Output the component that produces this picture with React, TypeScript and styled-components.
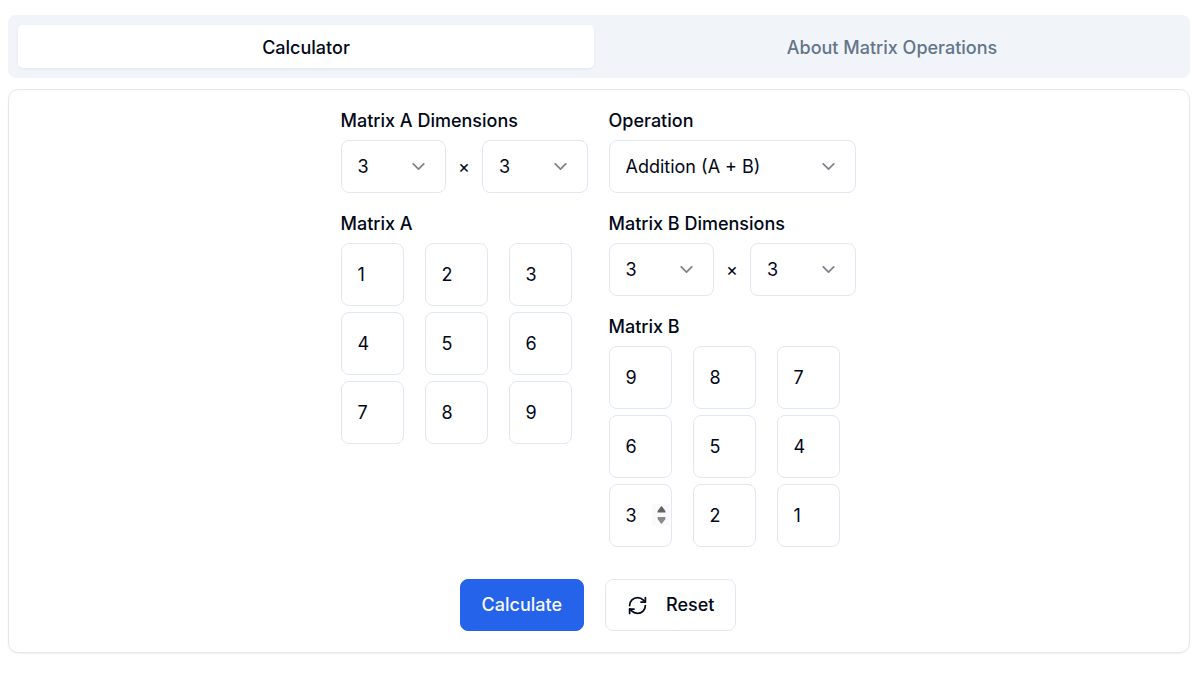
import React, { useState } from "react";
import styled, { createGlobalStyle } from "styled-components";
import { ChevronDown, RefreshCw } from "lucide-react";

const GlobalStyle = createGlobalStyle`
  *, *::before, *::after { box-sizing: border-box; }
  body {
    margin: 0;
    background: #ffffff;
    color: #020817;
    font-family: Inter, "Liberation Sans", sans-serif;
    font-size: 18px;
    line-height: 26px;
  }
  button, input, select { font: inherit; color: inherit; margin: 0; }
`;

const Page = styled.main`
  padding: 15px 10px 15px 8px;
`;

const TabList = styled.div`
  display: grid;
  grid-template-columns: repeat(2, 1fr);
  padding: 5px;
  border-radius: 8px;
  background: #f1f5f9;
`;

const Tab = styled.button<{ $active: boolean }>`
  margin: 5px;
  height: 43px;
  padding: 2px 16px 0;
  border: 0;
  border-radius: 5px;
  font-weight: 500;
  cursor: pointer;
  background: ${(p) => (p.$active ? "#ffffff" : "transparent")};
  color: ${(p) => (p.$active ? "#020817" : "#64748b")};
  box-shadow: ${(p) => (p.$active ? "0 1px 3px rgba(0, 0, 0, 0.06)" : "none")};
`;

const Card = styled.section`
  margin-top: 11px;
  padding: 20px 22px 21px 20px;
  border: 1px solid #e2e8f0;
  border-radius: 10px;
  box-shadow: 0 1px 2px rgba(0, 0, 0, 0.06);
`;

const Form = styled.form`
  max-width: 515px;
  margin: 0 auto;
`;

const Columns = styled.div`
  display: grid;
  grid-template-columns: repeat(2, 1fr);
  gap: 21px;
`;

const Column = styled.div`
  display: flex;
  flex-direction: column;
  gap: 20px;
`;

const Group = styled.fieldset`
  display: flex;
  flex-direction: column;
  gap: 8px;
  min-width: 0;
  margin: 0;
  padding: 0;
  border: 0;
`;

const Label = styled.label`
  line-height: 22px;
  font-weight: 500;
`;

const SelectRow = styled.div`
  display: flex;
  align-items: center;
`;

const Times = styled.span`
  width: 36px;
  text-align: center;
`;

const SelectBox = styled.div`
  position: relative;
  flex: 1;
  min-width: 0;

  svg {
    position: absolute;
    right: 17px;
    top: 16px;
    color: #020817;
    opacity: 0.5;
    pointer-events: none;
  }
`;

const SelectInput = styled.select`
  display: block;
  width: 100%;
  height: 53px;
  padding: 0 38px 0 16px;
  border: 1px solid #e2e8f0;
  border-radius: 8px;
  background: #ffffff;
  appearance: none;
`;

const Cells = styled.div`
  display: grid;
  grid-template-columns: repeat(3, 63px);
  gap: 6px 21px;
`;

const Cell = styled.div`
  position: relative;
`;

const CellInput = styled.input`
  display: block;
  width: 100%;
  height: 63px;
  padding: 0 16px;
  border: 1px solid #e2e8f0;
  border-radius: 8px;
  background: #ffffff;
  appearance: textfield;

  &::-webkit-inner-spin-button { appearance: none; margin: 0; }
`;

const Stepper = styled.svg`
  position: absolute;
  right: 2px;
  top: 20px;
  width: 18px;
  height: 21px;
`;

const Actions = styled.div`
  display: flex;
  justify-content: center;
  gap: 21px;
  margin-top: 32px;
`;

const ActionButton = styled.button<{ $primary?: boolean }>`
  display: flex;
  align-items: center;
  gap: 18px;
  height: 52px;
  padding: 0 21px;
  border: 1px solid ${(p) => (p.$primary ? "#2563eb" : "#e2e8f0")};
  border-radius: 8px;
  background: ${(p) => (p.$primary ? "#2563eb" : "#ffffff")};
  color: ${(p) => (p.$primary ? "#f8fafc" : "#020817")};
  font-weight: 500;
  cursor: pointer;
`;

const startA = [1, 2, 3, 4, 5, 6, 7, 8, 9];
const startB = [9, 8, 7, 6, 5, 4, 3, 2, 1];

function Picker({ id, name, options }: { id?: string; name?: string; options: string[] }) {
  return (
    <SelectBox>
      <SelectInput id={id} aria-label={name} defaultValue={options[0]}>
        {options.map((o) => (
          <option key={o}>{o}</option>
        ))}
      </SelectInput>
      <ChevronDown size={21} />
    </SelectBox>
  );
}

function Dimensions({ matrix }: { matrix: string }) {
  const id = `rows-${matrix}`;
  return (
    <Group>
      <Label htmlFor={id}>Matrix {matrix} Dimensions</Label>
      <SelectRow>
        <Picker id={id} options={["3", "2", "4"]} />
        <Times>×</Times>
        <Picker name={`Matrix ${matrix} columns`} options={["3", "2", "4"]} />
      </SelectRow>
    </Group>
  );
}

function Matrix({ matrix, start, stepperAt }: { matrix: string; start: number[]; stepperAt?: number }) {
  return (
    <Group>
      <Label htmlFor={`${matrix}-0`}>Matrix {matrix}</Label>
      <Cells>
        {start.map((value, i) => (
          <Cell key={i}>
            <CellInput
              id={`${matrix}-${i}`}
              type="number"
              aria-label={i ? `Matrix ${matrix} entry ${i + 1}` : undefined}
              defaultValue={value}
            />
            {stepperAt === i && (
              <Stepper viewBox="0 0 18 21" aria-hidden="true">
                <rect width="18" height="21" fill="#fafafa" />
                <path d="M9.5 2.3Q10 2.3 10.5 3L13.2 6.8Q14 8.5 13 8.5H6Q5 8.5 5.8 6.8L8.5 3Q9 2.3 9.5 2.3Z" fill="#636363" />
                <path d="M9.5 19.7Q10 19.7 10.5 19L13.2 15.2Q14 13 13 13H6Q5 13 5.8 15.2L8.5 19Q9 19.7 9.5 19.7Z" fill="#8b8b8b" />
              </Stepper>
            )}
          </Cell>
        ))}
      </Cells>
    </Group>
  );
}

export default function App() {
  const [tab, setTab] = useState(0);
  return (
    <Page>
      <GlobalStyle />
      <TabList role="tablist">
        {["Calculator", "About Matrix Operations"].map((name, i) => (
          <Tab key={name} type="button" role="tab" aria-selected={tab === i} $active={tab === i} onClick={() => setTab(i)}>
            {name}
          </Tab>
        ))}
      </TabList>
      <Card>
        <Form onSubmit={(e) => e.preventDefault()}>
          <Columns>
            <Column>
              <Dimensions matrix="A" />
              <Matrix matrix="A" start={startA} />
            </Column>
            <Column>
              <Group>
                <Label htmlFor="operation">Operation</Label>
                <Picker id="operation" options={["Addition (A + B)", "Subtraction (A - B)", "Multiplication (A × B)"]} />
              </Group>
              <Dimensions matrix="B" />
              <Matrix matrix="B" start={startB} stepperAt={6} />
            </Column>
          </Columns>
          <Actions>
            <ActionButton type="submit" $primary>Calculate</ActionButton>
            <ActionButton type="reset">
              <RefreshCw size={21} />
              Reset
            </ActionButton>
          </Actions>
        </Form>
      </Card>
    </Page>
  );
}
